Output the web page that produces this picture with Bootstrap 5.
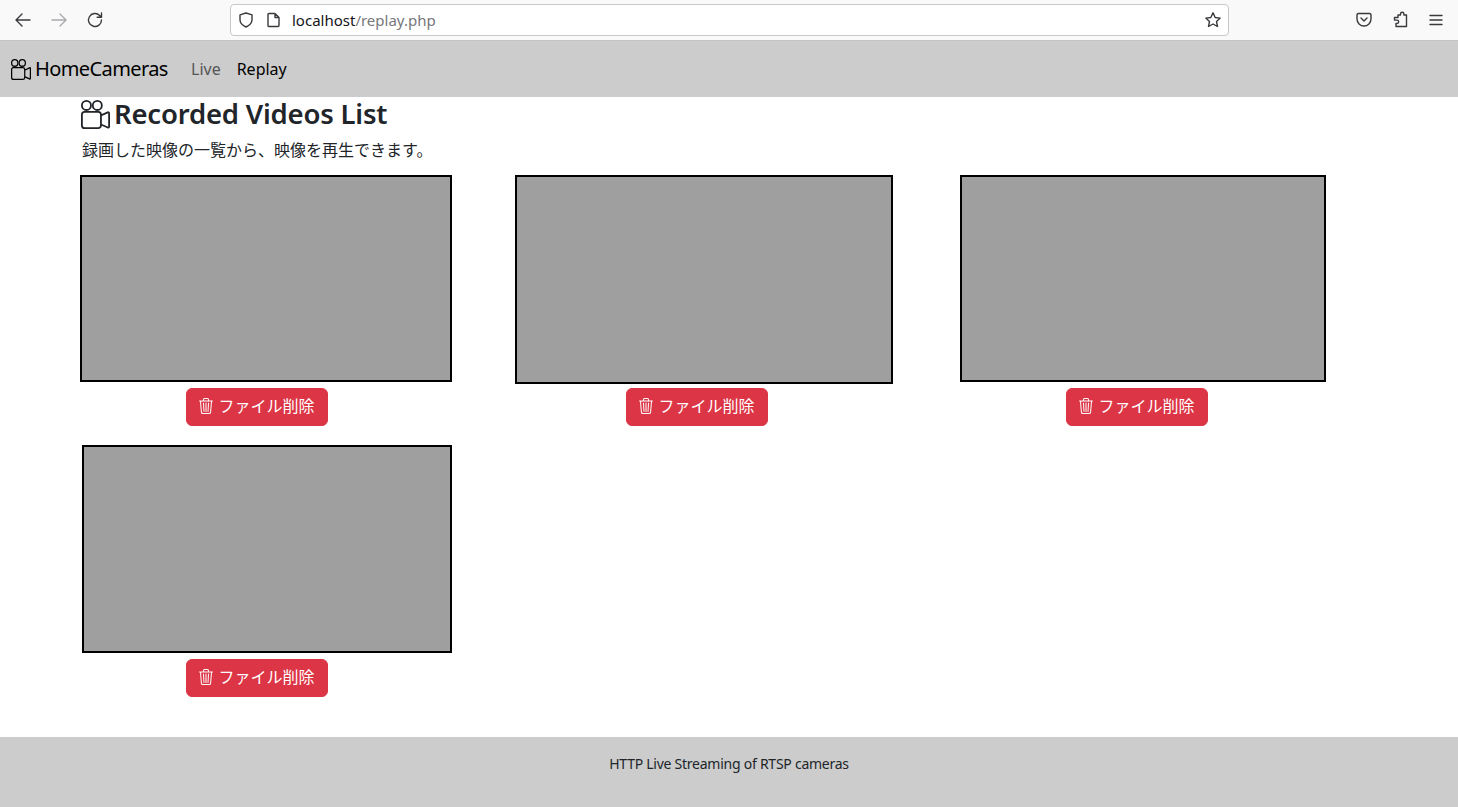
<!DOCTYPE html>
<html lang="ja">
<head>
<meta charset="utf-8">
<title>HomeCameras</title>
<link rel="stylesheet" href="https://cdn.jsdelivr.net/npm/bootstrap@5.3.0/dist/css/bootstrap.min.css">
<style>
html,body{height:100%;overflow:hidden}
body{font-family:"Noto Sans","Noto Sans CJK JP",sans-serif;background:#fff;color:#212529;font-size:16px}
.browser-bar{height:41px;background:#f9f9f9;border-bottom:1px solid #c4c4c6;padding-left:14px;padding-right:13px}
.tool-ico{width:18px;height:18px;fill:none;stroke:#3a3a3e;stroke-width:1.4;stroke-linecap:round;stroke-linejoin:round;flex:none}
.tool-off{stroke:#a9a9ad}
.nav-tools{width:216px;gap:18px}
.url-box{width:999px;height:32px;background:#fff;border:1px solid #c8c8cc;border-radius:4px;padding:0 6px 0 6px;font-size:15px;color:#15141a}
.url-rest{color:#77777c}
.doc-ico{margin-left:10px;margin-right:9px}
.right-tools{margin-left:auto;gap:18px}
.top-nav{height:56px;background:#ccc;padding-left:11px}
.brand-link{font-size:20px;color:#000;text-decoration:none;gap:4px;width:180px;letter-spacing:-.6px}
.reel-s{width:20px;height:21px}
.menu-link{font-size:16px;text-decoration:none;margin-right:16px}
.menu-dim{color:#555}
.menu-cur{color:#000}
.page-body{padding-left:37px;height:640px}
.title-row{padding-left:44px;height:78px}
.main-title{font-size:27.5px;font-weight:600;line-height:34px;margin:0;gap:4px;letter-spacing:-.2px}
.reel-l{width:29px;height:29px}
.sub-text{font-size:16px;margin:8px 0 0 1px;line-height:22px}
.video-grid{width:1320px;display:grid;grid-template-columns:repeat(3,440px)}
.video-cell{height:270px}
.video-box{background:#9f9f9f;border:2px solid #000;display:block}
.vb-a{width:372px;height:207px;margin-left:43px}
.vb-b{width:378px;height:209px;margin-left:38px}
.vb-c{width:366px;height:207px;margin-left:43px}
.vb-d{width:370px;height:208px;margin-left:45px}
.del-row{height:38px;margin-top:6px}
.vb-b + .del-row{margin-top:4px}
.del-btn{width:142px;height:38px;background:#dc3545;border-color:#dc3545;color:#fff;font-size:16px;line-height:1;padding:0 1px 2px 0;gap:4px;border-radius:6px}
.del-btn svg{width:16px;height:16px}
.foot-bar{height:70px;background:#ccc;font-size:14px;padding-top:17px;line-height:20px;letter-spacing:-.25px}
</style>
</head>
<body>
<div class="browser-bar d-flex align-items-center">
  <div class="nav-tools d-flex align-items-center">
    <svg class="tool-ico" viewBox="0 0 18 18"><path d="M16 9H2M8 3 2 9l6 6"/></svg>
    <svg class="tool-ico tool-off" viewBox="0 0 18 18"><path d="M2 9h14M10 3l6 6-6 6"/></svg>
    <svg class="tool-ico" viewBox="0 0 18 18"><path d="M15.5 9A6.5 6.5 0 1 1 13.6 4.4L15.5 6.3M15.5 2v4.3h-4.3"/></svg>
  </div>
  <div class="url-box d-flex align-items-center">
    <svg class="tool-ico" viewBox="0 0 18 18"><path d="M9 2 3 3.8v5c0 3.500 2.500 5.700 6 7.200 3.500-1.500 6-3.700 6-7.200v-5z"/></svg>
    <svg class="tool-ico doc-ico" viewBox="0 0 18 18"><path d="M4 2.500h6l4 4v8a1 1 0 0 1-1 1H4a1 1 0 0 1-1-1v-11a1 1 0 0 1 1-1zM10 2.500v4h4"/></svg>
    <span>localhost<span class="url-rest">/replay.php</span></span>
    <svg class="tool-ico ms-auto" viewBox="0 0 18 18"><path d="m9 1.800 2.200 4.700 5 .6-3.700 3.400 1 5-4.500-2.500-4.500 2.500 1-5L1.800 7.100l5-.6z"/></svg>
  </div>
  <div class="right-tools d-flex align-items-center">
    <svg class="tool-ico" viewBox="0 0 18 18"><path d="M3.500 2.500h11a1.500 1.500 0 0 1 1.500 1.500v4a7 7 0 0 1-14 0V4a1.500 1.500 0 0 1 1.500-1.500zM6 7l3 3 3-3"/></svg>
    <svg class="tool-ico" viewBox="0 0 18 18"><path d="M7 4h2.500V3a1.700 1.700 0 0 1 3.400 0v1H15.500v11.500H5V12.500h1a1.700 1.700 0 0 0 0-3.400H3.500V6.500H7z"/></svg>
    <svg class="tool-ico" viewBox="0 0 18 18"><path d="M3 4.500h12M3 9h12M3 13.500h12"/></svg>
  </div>
</div>

<nav class="top-nav d-flex align-items-center">
  <a class="brand-link d-flex align-items-center" href="#">
    <svg class="reel-s" viewBox="0 0 16 16" preserveAspectRatio="none" fill="currentColor"><path d="M6 3a3 3 0 1 1-6 0 3 3 0 0 1 6 0zM1 3a2 2 0 1 0 4 0 2 2 0 0 0-4 0z"/><path d="M9 6h.5a2 2 0 0 1 1.983 1.738l3.11-1.382A1 1 0 0 1 16 7.269v7.462a1 1 0 0 1-1.406.913l-3.111-1.382A2 2 0 0 1 9.500 16H2a2 2 0 0 1-2-2V8a2 2 0 0 1 2-2h7zm6 8.730V7.270l-3.500 1.555v4.350l3.500 1.556zM1 8v6a1 1 0 0 0 1 1h7.500a1 1 0 0 0 1-1V8a1 1 0 0 0-1-1H2a1 1 0 0 0-1 1z"/><path d="M9 6a3 3 0 1 0 0-6 3 3 0 0 0 0 6zM7 3a2 2 0 1 1 4 0 2 2 0 0 1-4 0z"/></svg>
    <span>HomeCameras</span>
  </a>
  <a class="menu-link menu-dim" href="#">Live</a>
  <a class="menu-link menu-cur" href="#">Replay</a>
</nav>

<main class="page-body">
  <div class="title-row">
    <h1 class="main-title d-flex align-items-center">
      <svg class="reel-l" viewBox="0 0 16 16" preserveAspectRatio="none" fill="currentColor"><path d="M6 3a3 3 0 1 1-6 0 3 3 0 0 1 6 0zM1 3a2 2 0 1 0 4 0 2 2 0 0 0-4 0z"/><path d="M9 6h.5a2 2 0 0 1 1.983 1.738l3.11-1.382A1 1 0 0 1 16 7.269v7.462a1 1 0 0 1-1.406.913l-3.111-1.382A2 2 0 0 1 9.500 16H2a2 2 0 0 1-2-2V8a2 2 0 0 1 2-2h7zm6 8.730V7.270l-3.500 1.555v4.350l3.500 1.556zM1 8v6a1 1 0 0 0 1 1h7.500a1 1 0 0 0 1-1V8a1 1 0 0 0-1-1H2a1 1 0 0 0-1 1z"/><path d="M9 6a3 3 0 1 0 0-6 3 3 0 0 0 0 6zM7 3a2 2 0 1 1 4 0 2 2 0 0 1-4 0z"/></svg>
      <span>Recorded Videos List</span>
    </h1>
    <p class="sub-text">録画した映像の一覧から、映像を再生できます。</p>
  </div>
  <div class="video-grid">
    <div class="video-cell">
      <div class="video-box vb-a"></div>
      <div class="del-row d-flex justify-content-center"><button class="btn del-btn d-flex align-items-center justify-content-center"><svg viewBox="0 0 16 16" fill="currentColor"><path d="M6.500 1h3a.5.5 0 0 1 .5.5v1H6v-1a.5.5 0 0 1 .5-.5ZM11 2.500v-1A1.500 1.500 0 0 0 9.500 0h-3A1.500 1.500 0 0 0 5 1.500v1H2.506a.58.58 0 0 0-.01 0H1.500a.5.5 0 0 0 0 1h.538l.853 10.660A2 2 0 0 0 4.885 16h6.230a2 2 0 0 0 1.994-1.840l.853-10.660h.538a.5.5 0 0 0 0-1h-.995a.59.59 0 0 0-.01 0H11Zm1.958 1-.846 10.580a1 1 0 0 1-.997.920h-6.230a1 1 0 0 1-.997-.920L3.042 3.500h9.916Zm-7.487 1a.5.5 0 0 1 .528.470l.5 8.500a.5.5 0 0 1-.998.060L5 5.030a.5.5 0 0 1 .47-.530Zm5.058 0a.5.5 0 0 1 .47.530l-.5 8.500a.5.5 0 1 1-.998-.060l.5-8.500a.5.5 0 0 1 .528-.470ZM8 4.500a.5.5 0 0 1 .5.500v8.500a.5.5 0 0 1-1 0V5a.5.5 0 0 1 .5-.5Z"/></svg><span>ファイル削除</span></button></div>
    </div>
    <div class="video-cell">
      <div class="video-box vb-b"></div>
      <div class="del-row d-flex justify-content-center"><button class="btn del-btn d-flex align-items-center justify-content-center"><svg viewBox="0 0 16 16" fill="currentColor"><path d="M6.500 1h3a.5.5 0 0 1 .5.5v1H6v-1a.5.5 0 0 1 .5-.5ZM11 2.500v-1A1.500 1.500 0 0 0 9.500 0h-3A1.500 1.500 0 0 0 5 1.500v1H2.506a.58.58 0 0 0-.01 0H1.500a.5.5 0 0 0 0 1h.538l.853 10.660A2 2 0 0 0 4.885 16h6.230a2 2 0 0 0 1.994-1.840l.853-10.660h.538a.5.5 0 0 0 0-1h-.995a.59.59 0 0 0-.01 0H11Zm1.958 1-.846 10.580a1 1 0 0 1-.997.920h-6.230a1 1 0 0 1-.997-.920L3.042 3.500h9.916Zm-7.487 1a.5.5 0 0 1 .528.470l.5 8.500a.5.5 0 0 1-.998.060L5 5.030a.5.5 0 0 1 .47-.530Zm5.058 0a.5.5 0 0 1 .47.530l-.5 8.500a.5.5 0 1 1-.998-.060l.5-8.500a.5.5 0 0 1 .528-.470ZM8 4.500a.5.5 0 0 1 .5.500v8.500a.5.5 0 0 1-1 0V5a.5.5 0 0 1 .5-.5Z"/></svg><span>ファイル削除</span></button></div>
    </div>
    <div class="video-cell">
      <div class="video-box vb-c"></div>
      <div class="del-row d-flex justify-content-center"><button class="btn del-btn d-flex align-items-center justify-content-center"><svg viewBox="0 0 16 16" fill="currentColor"><path d="M6.500 1h3a.5.5 0 0 1 .5.5v1H6v-1a.5.5 0 0 1 .5-.5ZM11 2.500v-1A1.500 1.500 0 0 0 9.500 0h-3A1.500 1.500 0 0 0 5 1.500v1H2.506a.58.58 0 0 0-.01 0H1.500a.5.5 0 0 0 0 1h.538l.853 10.660A2 2 0 0 0 4.885 16h6.230a2 2 0 0 0 1.994-1.840l.853-10.660h.538a.5.5 0 0 0 0-1h-.995a.59.59 0 0 0-.01 0H11Zm1.958 1-.846 10.580a1 1 0 0 1-.997.920h-6.230a1 1 0 0 1-.997-.920L3.042 3.500h9.916Zm-7.487 1a.5.5 0 0 1 .528.470l.5 8.500a.5.5 0 0 1-.998.060L5 5.030a.5.5 0 0 1 .47-.530Zm5.058 0a.5.5 0 0 1 .47.530l-.5 8.500a.5.5 0 1 1-.998-.060l.5-8.500a.5.5 0 0 1 .528-.470ZM8 4.500a.5.5 0 0 1 .5.500v8.500a.5.5 0 0 1-1 0V5a.5.5 0 0 1 .5-.5Z"/></svg><span>ファイル削除</span></button></div>
    </div>
    <div class="video-cell">
      <div class="video-box vb-d"></div>
      <div class="del-row d-flex justify-content-center"><button class="btn del-btn d-flex align-items-center justify-content-center"><svg viewBox="0 0 16 16" fill="currentColor"><path d="M6.500 1h3a.5.5 0 0 1 .5.5v1H6v-1a.5.5 0 0 1 .5-.5ZM11 2.500v-1A1.500 1.500 0 0 0 9.500 0h-3A1.500 1.500 0 0 0 5 1.500v1H2.506a.58.58 0 0 0-.01 0H1.500a.5.5 0 0 0 0 1h.538l.853 10.660A2 2 0 0 0 4.885 16h6.230a2 2 0 0 0 1.994-1.840l.853-10.660h.538a.5.5 0 0 0 0-1h-.995a.59.59 0 0 0-.01 0H11Zm1.958 1-.846 10.580a1 1 0 0 1-.997.920h-6.230a1 1 0 0 1-.997-.920L3.042 3.500h9.916Zm-7.487 1a.5.5 0 0 1 .528.470l.5 8.500a.5.5 0 0 1-.998.060L5 5.030a.5.5 0 0 1 .47-.530Zm5.058 0a.5.5 0 0 1 .47.530l-.5 8.500a.5.5 0 1 1-.998-.060l.5-8.500a.5.5 0 0 1 .528-.470ZM8 4.500a.5.5 0 0 1 .5.500v8.500a.5.5 0 0 1-1 0V5a.5.5 0 0 1 .5-.5Z"/></svg><span>ファイル削除</span></button></div>
    </div>
  </div>
</main>
<footer class="foot-bar text-center">HTTP Live Streaming of RTSP cameras</footer>
<script src="https://cdn.jsdelivr.net/npm/bootstrap@5.3.0/dist/js/bootstrap.bundle.min.js"></script>
</body>
</html>
